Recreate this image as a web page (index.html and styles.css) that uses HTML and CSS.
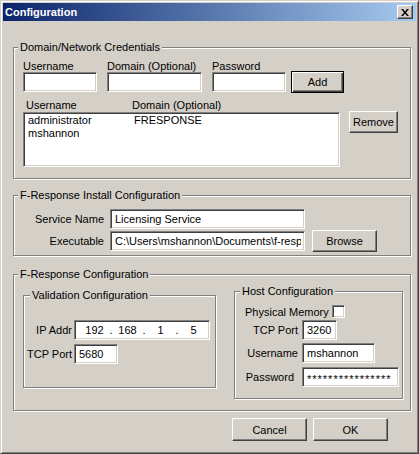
FILE: index.html
```html
<!DOCTYPE html>
<html>
<head>
<meta charset="utf-8">
<title>Configuration</title>
<link rel="stylesheet" href="styles.css">
</head>
<body>
<div class="window">
  <div class="titlebar">
    <span class="title">Configuration</span>
    <div class="close"><svg width="8" height="7" viewBox="0 0 8 7"><path d="M0 0h2l2 2.4L6 0h2L5 3.5 8 7H6L4 4.6 2 7H0l3-3.5z" fill="#000"/></svg></div>
  </div>
  <div class="content">
    <div class="group g-cred">
      <div class="group-title">Domain/Network Credentials</div>
      <div class="cred-row">
        <div class="cred-col"><div class="lbl">Username</div><div class="field w74"></div></div>
        <div class="cred-col"><div class="lbl">Domain (Optional)</div><div class="field w95"></div></div>
        <div class="cred-col"><div class="lbl">Password</div><div class="field w74"></div></div>
        <div class="btn btn-default btn-add">Add</div>
      </div>
      <div class="list-header"><span class="c1">Username</span><span>Domain (Optional)</span></div>
      <div class="list-row">
        <div class="listbox">
          <div class="item"><span class="c1">administrator</span><span>FRESPONSE</span></div>
          <div class="item"><span class="c1">mshannon</span></div>
        </div>
        <div class="btn btn-remove">Remove</div>
      </div>
    </div>

    <div class="group g-install">
      <div class="group-title">F-Response Install Configuration</div>
      <div class="form-row row1">
        <span class="flabel">Service Name</span>
        <div class="field w195">Licensing Service</div>
      </div>
      <div class="form-row row2">
        <span class="flabel">Executable</span>
        <div class="field w195"><span class="clip">C:\Users\mshannon\Documents\f-resp</span></div>
        <div class="btn btn-browse">Browse</div>
      </div>
    </div>

    <div class="group g-fresp">
      <div class="group-title">F-Response Configuration</div>
      <div class="sub-row">
        <div class="group g-valid">
          <div class="group-title">Validation Configuration</div>
          <div class="vrow ip-row">
            <span class="vlabel">IP Addr</span>
            <div class="field ip">
              <span class="seg">192</span><span class="dot">.</span><span class="seg">168</span><span class="dot">.</span><span class="seg">1</span><span class="dot">.</span><span class="seg">5</span>
            </div>
          </div>
          <div class="vrow port-row">
            <span class="vlabel">TCP Port</span>
            <div class="field w44">5680</div>
          </div>
        </div>
        <div class="group g-host">
          <div class="group-title">Host Configuration</div>
          <div class="pm-row">
            <span class="pm-label">Physical Memory</span>
            <div class="check"></div>
          </div>
          <div class="hrow h-port">
            <span class="hlabel">TCP Port</span>
            <div class="field w35">3260</div>
          </div>
          <div class="hrow h-user">
            <span class="hlabel">Username</span>
            <div class="field w73">mshannon</div>
          </div>
          <div class="hrow h-pass">
            <span class="hlabel pw-label">Password</span>
            <div class="field w97 pw">****************</div>
          </div>
        </div>
      </div>
    </div>

    <div class="btn-row">
      <div class="btn btn-dlg">Cancel</div>
      <div class="btn btn-dlg">OK</div>
    </div>
  </div>
</div>
</body>
</html>
```

FILE: styles.css
```css
* { box-sizing: border-box; }

html, body {
  margin: 0;
  background: #d4d0c8;
}

body {
  font-family: "Liberation Sans", Arial, sans-serif;
  font-size: 11px;
  color: #000;
}

.window {
  width: 419px;
  height: 454px;
  border: 1px solid;
  border-color: #d4d0c8 #404040 #404040 #d4d0c8;
  box-shadow: inset 1px 1px #fff, inset -1px -1px #808080;
  padding: 2px;
  background: #d4d0c8;
}

.titlebar {
  height: 18px;
  background: linear-gradient(to right, #0a246a, #a6caf0);
  display: flex;
  align-items: center;
  justify-content: space-between;
  padding: 0 3px 0 2px;
}

.title {
  color: #fff;
  font-weight: bold;
  font-size: 11px;
}

.close {
  width: 16px;
  height: 14px;
  background: #d4d0c8;
  border: 1px solid;
  border-color: #fff #404040 #404040 #fff;
  box-shadow: inset -1px -1px #808080;
  display: flex;
  align-items: center;
  justify-content: center;
}

.close svg { display: block; }

.content {
  padding: 0 5px 0 10px;
}

.group {
  border: 1px solid #808080;
  box-shadow: inset 1px 1px #fff, 1px 1px #fff;
}

.group-title {
  width: max-content;
  margin: -7px 0 0 4px;
  padding: 0 2px;
  line-height: 13px;
  background: #d4d0c8;
}

.g-cred { margin-top: 26px; height: 132px; }
.g-install { margin-top: 16px; height: 61px; }
.g-fresp { margin-top: 18px; height: 137px; }

/* sunken edit field */
.field {
  height: 20px;
  background: #fff;
  border: 1px solid;
  border-color: #808080 #fff #fff #808080;
  box-shadow: inset 1px 1px #404040, inset -1px -1px #d4d0c8;
  padding: 0 3px 0 4px;
  line-height: 18px;
  white-space: nowrap;
  overflow: hidden;
  flex-shrink: 0;
}

.clip {
  display: block;
  overflow: hidden;
  white-space: nowrap;
}

.w35 { width: 35px; }
.w44 { width: 44px; }
.w73 { width: 73px; }
.w74 { width: 74px; }
.w95 { width: 95px; }
.w97 { width: 97px; }
.w195 { width: 195px; }

/* raised button */
.btn {
  display: flex;
  align-items: center;
  justify-content: center;
  height: 23px;
  background: #d4d0c8;
  border: 1px solid;
  border-color: #fff #404040 #404040 #fff;
  box-shadow: inset -1px -1px #808080;
  flex-shrink: 0;
}

.btn-default {
  border-color: #000;
  box-shadow: inset 1px 1px #fff, inset -1px -1px #404040, inset -2px -2px #808080;
}

/* credentials */
.cred-row {
  display: flex;
  align-items: flex-end;
  gap: 10px;
  margin-top: 6px;
  padding-left: 9px;
}

.lbl { line-height: 12px; }

.btn-add {
  width: 53px;
  height: 22px;
  margin-left: -5px;
  margin-bottom: -1px;
}

.list-header {
  display: flex;
  margin-top: 7px;
  padding-left: 12px;
  line-height: 12px;
}

.c1 { width: 106px; flex-shrink: 0; }

.list-row {
  display: flex;
  align-items: flex-start;
  padding-left: 9px;
}

.listbox {
  width: 317px;
  height: 55px;
  margin-top: 1px;
  background: #fff;
  border: 1px solid;
  border-color: #808080 #fff #fff #808080;
  box-shadow: inset 1px 1px #404040, inset -1px -1px #d4d0c8;
  padding: 1px 0 0 4px;
}

.item {
  display: flex;
  line-height: 13px;
}

.btn-remove {
  width: 49px;
  height: 22px;
  margin-left: 9px;
}

/* install */
.form-row {
  display: flex;
  align-items: center;
  height: 20px;
}

.row1 { margin-top: 7px; }
.row2 { margin-top: 2px; }

.flabel {
  width: 90px;
  text-align: right;
  margin-right: 6px;
}

.btn-browse {
  width: 65px;
  height: 22px;
  margin-left: 7px;
}

/* f-response configuration */
.sub-row {
  display: flex;
  align-items: flex-start;
  padding-left: 9px;
}

.g-valid {
  width: 193px;
  height: 93px;
  margin-top: 14px;
}

.g-valid .group-title { margin-left: 6px; }

.g-host {
  width: 169px;
  height: 108px;
  margin-top: 10px;
  margin-left: 18px;
}

.g-host .group-title { margin-left: 5px; }

.vrow, .hrow {
  display: flex;
  align-items: center;
  height: 20px;
}

.ip-row { margin-top: 18px; }
.port-row { margin-top: 4px; }

.vlabel {
  width: 48px;
  text-align: right;
  margin-right: 2px;
}

.ip {
  width: 136px;
  display: flex;
  padding: 0 0 0 7px;
}

.seg { width: 25px; text-align: center; }
.dot { width: 8px; text-align: center; }

.pm-row {
  display: flex;
  align-items: center;
  height: 13px;
  margin-top: 7px;
  padding-left: 10px;
}

.check {
  width: 13px;
  height: 13px;
  margin-left: 3px;
  background: #fff;
  border: 1px solid;
  border-color: #808080 #fff #fff #808080;
  box-shadow: inset 1px 1px #404040, inset -1px -1px #d4d0c8;
}

.hlabel {
  width: 63px;
  text-align: right;
  margin-right: 4px;
}

.pw-label { width: 59px; margin-right: 8px; }

.h-port { margin-top: 2px; }
.h-user { margin-top: 3px; }
.h-pass { margin-top: 4px; }

.pw {
  letter-spacing: 1px;
  line-height: 22px;
}

.btn-row {
  display: flex;
  justify-content: flex-end;
  gap: 6px;
  margin-top: 7px;
  padding-right: 23px;
}

.btn-dlg { width: 75px; }
```
